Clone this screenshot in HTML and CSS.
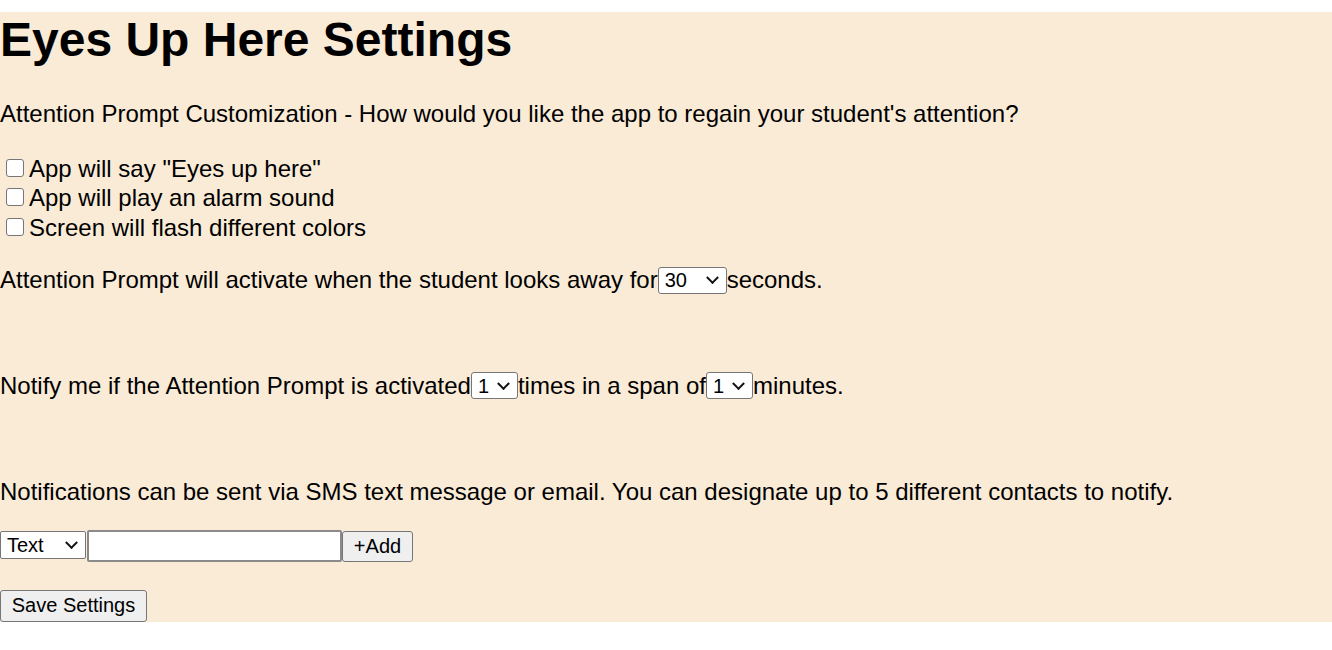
FILE: index.html
```html
<!DOCTYPE html>
<html lang="en">

<head>
    <meta charset="UTF-8">
    <meta name="viewport" content="width=device-width, initial-scale=1.0">
    <title>Eyes Up Here Settings</title>
    <link rel="stylesheet" href="styles.css">
</head>

<body>
    <div class="settings">
        <h1>Eyes Up Here Settings</h1>
        <p class="intro">Attention Prompt Customization - How would you like the app to regain your student's attention?</p>

        <div class="prompt-options">
            <label class="option"><input type="checkbox" name="say">App will say "Eyes up here"</label>
            <label class="option"><input type="checkbox" name="alarm">App will play an alarm sound</label>
            <label class="option"><input type="checkbox" name="flash">Screen will flash different colors</label>
        </div>

        <div class="rule rule-delay">
            Attention Prompt will activate when the student looks away for
            <span class="select-wrap">
                <select class="pick pick-seconds">
                    <option>30</option>
                    <option>10</option>
                    <option>15</option>
                    <option>20</option>
                    <option>45</option>
                    <option>60</option>
                </select>
            </span>
            seconds.
        </div>

        <div class="rule rule-notify">
            Notify me if the Attention Prompt is activated
            <span class="select-wrap">
                <select class="pick pick-small">
                    <option>1</option>
                    <option>2</option>
                    <option>3</option>
                    <option>4</option>
                    <option>5</option>
                </select>
            </span>
            times in a span of
            <span class="select-wrap">
                <select class="pick pick-small">
                    <option>1</option>
                    <option>2</option>
                    <option>3</option>
                    <option>4</option>
                    <option>5</option>
                </select>
            </span>
            minutes.
        </div>

        <p class="contacts-note">Notifications can be sent via SMS text message or email. You can designate up to 5 different contacts to notify.</p>

        <div class="contact-row">
            <span class="select-wrap select-wrap-method">
                <select class="pick pick-method">
                    <option>Text</option>
                    <option>Email</option>
                </select>
            </span>
            <input type="text" class="contact-input">
            <button class="btn btn-add">+Add</button>
        </div>

        <button class="btn btn-save">Save Settings</button>
    </div>
</body>

</html>
```

FILE: styles.css
```css
* {
    box-sizing: border-box;
}

body {
    margin: 0;
    font-family: 'Liberation Sans', Arial, sans-serif;
    font-size: 24px;
    color: #000;
    background: #fff;
}

.settings {
    margin-top: 12px;
    background: #faebd7;
}

h1 {
    margin: 0;
    font-size: 48px;
    font-weight: bold;
}

.intro {
    margin: 33px 0 0;
}

.prompt-options {
    margin-top: 26px;
}

.option {
    display: flex;
    align-items: center;
    height: 29.5px;
}

.option input {
    appearance: none;
    flex: none;
    width: 18px;
    height: 18px;
    margin: 0 5px 2px 6px;
    background: #fff;
    border: 1px solid #767676;
    border-radius: 3px;
}

.option input:checked {
    background: #0075ff;
    border-color: #0075ff;
}

.rule {
    display: flex;
    align-items: center;
    height: 27.6px;
}

.rule-delay {
    margin-top: 24px;
}

.rule-notify {
    margin-top: 78px;
}

/* select with hand-drawn chevron */
.select-wrap {
    position: relative;
    display: inline-flex;
}

.select-wrap::after {
    content: '';
    position: absolute;
    right: 10px;
    top: 50%;
    width: 7px;
    height: 7px;
    border-right: 2px solid #111;
    border-bottom: 2px solid #111;
    transform: translateY(-75%) rotate(45deg);
    pointer-events: none;
}

.pick {
    appearance: none;
    font-family: 'Liberation Sans', Arial, sans-serif;
    font-size: 20px;
    height: 27px;
    padding: 0 0 0 6px;
    color: #000;
    background: #fff;
    border: 1px solid #767676;
    border-radius: 3px;
}

.pick-seconds {
    width: 69px;
}

.pick-small {
    width: 47px;
}

.select-wrap-method {
    margin-top: 1px;
}

.pick-method {
    width: 86px;
    height: 28px;
    border-radius: 2px;
}

.contacts-note {
    margin: 78px 0 0;
}

.contact-row {
    display: flex;
    align-items: flex-start;
    margin-top: 24px;
}

.contact-input {
    width: 255px;
    height: 32px;
    margin-left: 1px;
    font-size: 20px;
    border: 2px solid #8a8a8a;
    border-radius: 2px;
    background: #fff;
}

.btn {
    font-family: 'Liberation Sans', Arial, sans-serif;
    font-size: 20px;
    color: #000;
    background: #efefef;
    border: 1px solid #767676;
    border-radius: 3px;
    padding: 0 10px;
}

.btn-add {
    width: 71px;
    height: 31px;
    margin-top: 1px;
}

.btn-save {
    display: block;
    width: 147px;
    height: 32px;
    margin-top: 28px;
}
```
